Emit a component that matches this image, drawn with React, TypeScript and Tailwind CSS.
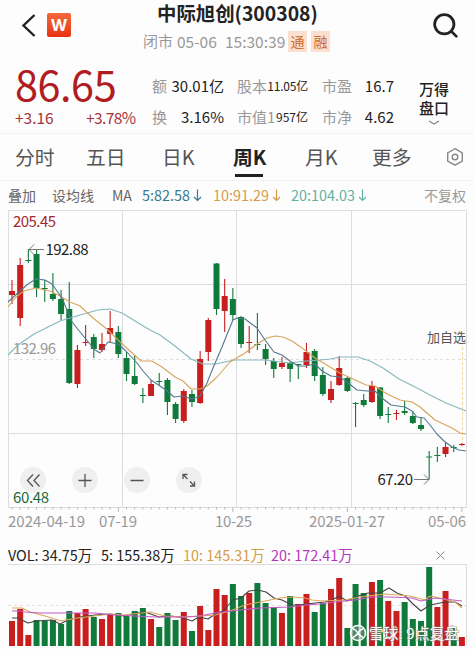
import { Search } from "lucide-react";

const RED = "#c81e1e";
const GREEN = "#0f7a3a";
const STEP = 8.18;

// [high, low, body top, body bottom, volume top, price colour, volume colour]
type Candle = [number, number, number, number, number, "r" | "g", "r" | "g"];

const candles: Candle[] = [
  [280, 304, 291, 295, 621, "r", "r"],
  [258, 326, 265, 318, 609, "r", "r"],
  [249, 263, 260, 261, 635, "g", "r"],
  [250, 297, 254, 288, 620, "g", "g"],
  [280, 302, 288, 289, 621, "g", "g"],
  [273, 301, 294, 299, 620, "g", "g"],
  [290, 320, 299, 314, 624, "g", "g"],
  [282, 384, 309, 383, 611, "g", "g"],
  [345, 388, 350, 384, 613, "r", "r"],
  [325, 346, 342, 343, 609, "r", "r"],
  [334, 358, 337, 349, 617, "g", "g"],
  [333, 352, 344, 350, 619, "r", "r"],
  [311, 342, 328, 334, 614, "r", "r"],
  [326, 358, 332, 354, 613, "g", "g"],
  [352, 381, 358, 374, 616, "g", "g"],
  [355, 385, 376, 384, 611, "g", "g"],
  [388, 403, 395, 396, 608, "g", "g"],
  [380, 396, 384, 396, 619, "r", "r"],
  [373, 385, 381, 382, 627, "g", "g"],
  [378, 415, 380, 402, 613, "g", "g"],
  [402, 423, 404, 419, 620, "g", "g"],
  [389, 423, 391, 421, 612, "r", "r"],
  [390, 407, 394, 402, 631, "g", "g"],
  [351, 404, 359, 403, 606, "r", "r"],
  [318, 361, 320, 352, 630, "r", "r"],
  [263, 315, 263.5, 309, 589, "g", "r"],
  [279, 332, 296, 311, 595, "r", "r"],
  [288, 320, 299, 315, 584, "g", "g"],
  [316, 348, 317, 344, 596, "g", "g"],
  [326, 353, 342, 343, 593, "r", "r"],
  [313, 350, 344, 345, 583, "g", "g"],
  [344, 365, 349, 359, 603, "g", "g"],
  [358, 378, 361, 369, 607, "g", "g"],
  [357, 369, 363, 367, 613, "r", "r"],
  [362, 382, 363, 369, 596, "g", "g"],
  [364, 379, 364, 365, 604, "g", "r"],
  [343, 368, 352, 365, 594, "r", "r"],
  [349, 381, 351, 376, 612, "g", "g"],
  [367, 396, 375, 394, 603, "g", "g"],
  [381, 403, 389, 400, 589, "r", "r"],
  [356, 386, 368, 385, 578, "r", "r"],
  [377, 392, 378, 391, 628, "g", "g"],
  [402, 427, 403, 404, 584, "g", "g"],
  [394, 407, 400, 405, 593, "g", "g"],
  [381, 403, 386, 402, 582, "r", "r"],
  [387, 419, 387.5, 416, 580, "g", "g"],
  [407, 423, 414, 415, 601, "g", "r"],
  [410, 420, 413, 414, 611, "r", "r"],
  [401, 415, 411, 413, 602, "g", "g"],
  [411, 424, 416, 423, 619, "g", "g"],
  [417, 431, 425, 429, 621, "g", "g"],
  [451, 479, 456.5, 457.5, 567, "g", "g"],
  [447, 462, 455, 456, 607, "g", "r"],
  [443, 457, 447, 454, 591, "r", "r"],
  [445, 452, 447, 448, 627, "g", "g"],
  [443, 446, 444, 445, 637, "r", "r"],
];

const ma5 =
  "8,302 20,291 28,284 36,279 45,280 52,284 62,298 72,322 85,338 95,350 100,353 108,342 118,344 126,351 137,363 143,371 151,380 160,386 166,390 174,397 183,396 192,399 200,396 207,383 213,368 222,347 228,332 233,320 237,318 245,319 257,328 265,340 274,352 282,355 290,361 298,366 306,366 315,364 322,371 331,376 340,377 347,382 357,390 367,391 375,391 382,398 391,405 405,407 412,411 417,417 424,418 430,425 437,434 444,441 452,447 459,450 466,451";
const ma10 =
  "8,307 16,297 24,291 36,288 50,291 60,296 70,302 80,306 93,318 108,330 120,342 130,351 141,361 152,361 162,367 175,377 183,381 191,389 200,389 207,386 217,377 230,362 245,353 257,344 267,338 275,336 283,337 292,341 302,348 315,358 330,367 340,373 353,379 366,385 375,386 387,394 400,400 412,402 420,407 435,420 452,428 460,433 466,434";
const ma20 =
  "8,355 18,345 34,334 60,321 80,315 98,310 110,309 122,313 140,324 150,330 160,335 175,346 191,359 203,364 216,364 234,360 265,360 290,363 306,361 320,360 330,359 340,357 358,357 370,361 383,368 399,379 417,388 430,395 446,403 466,411";
const vol5 =
  "12,618 18,618 28,623 36,621 52,620 60,624 68,620 80,617 95,615 110,614 124,616 137,613 145,612 159,617 170,616 180,617 192,621 199,617 208,619 215,614 223,611 233,600 241,598 249,591 258,590 266,592 274,598 282,600 292,605 299,605 315,603 325,602 332,600 339,596 347,601 358,596 368,593 380,593 389,588 397,593 405,596 413,604 421,611 430,605 445,602 455,602 462,606";
const vol10 =
  "12,608 22,608 30,612 45,616 61,621 77,618 95,616 110,614 124,615 150,612 165,616 185,617 215,615 230,611 245,605 260,602 280,598 292,597 305,598 312,600 322,601 345,600 360,597 385,594 410,596 425,600 430,596 440,598 455,602 462,608";
const vol20 =
  "12,611 20,611 25,612 40,613 70,613 95,613 115,615 135,616 155,617 185,617 200,616 215,613 240,610 260,608 290,607 305,605 320,604 335,602 355,600 372,597 390,597 412,598 421,601 435,598 462,601";

const dates = [
  { label: "2024-04-19", x: 8, w: 77 },
  { label: "07-19", x: 99, w: 38 },
  { label: "10-25", x: 215, w: 37 },
  { label: "2025-01-27", x: 309, w: 76 },
  { label: "05-06", x: 428, w: 38 },
];

const color = (c: "r" | "g") => (c === "r" ? RED : GREEN);
const cx = (i: number) => 12 + i * STEP;

function Header() {
  return (
    <header className="flex h-[60px] items-start">
      <svg className="ml-[20px] mt-[13px]" width="18" height="26" fill="none" stroke="#222" strokeWidth="2.4">
        <path d="M14.5 2 3.5 12.5 14.5 23" />
      </svg>
      <div className="ml-[9px] mt-[13px] flex h-[24px] w-[24px] items-center justify-center rounded-[2px] bg-linear-to-b from-[#f4673c] to-[#e8300f] font-['Inter',sans-serif] text-[16px] leading-[24px] font-bold text-white">
        W
      </div>
      <div className="ml-[72px] flex w-[188px] flex-col">
        <h1 className="ml-[14px] h-[28px] whitespace-nowrap text-[19.4px] leading-[28px] font-bold text-[#222]">
          <span className="inline-block -translate-y-px">中际旭创(300308)</span>
        </h1>
        <div className="mt-[2px] flex h-[22px] items-center whitespace-nowrap text-[15px] leading-[22px] text-[#999]">
          <span className="w-[34px]">闭市</span>
          <span className="w-[48px] text-[15.5px]">05-06</span>
          <span className="w-[63px] text-[15.5px]">15:30:39</span>
          <span className="h-[21px] w-[19px] bg-[#fbe0d0] text-center text-[14px] leading-[21px] text-[#d06a2c]">通</span>
          <span className="ml-[4px] h-[21px] w-[19px] bg-[#fbe0d0] text-center text-[14px] leading-[21px] text-[#d06a2c]">融</span>
        </div>
      </div>
      <Search className="ml-[100px] mt-[11px] text-[#222]" size={29} strokeWidth={2.3} />
    </header>
  );
}

function Quote() {
  return (
    <section className="flex h-[74px] border-b border-[#f3f1f1]">
      <div className="w-[152px] pl-[15px] text-[#b01c22]">
        <div className="h-[46px] text-[41.5px] leading-[46px] tracking-[-0.5px]">86.65</div>
        <div className="flex text-[15.5px] leading-[23px] text-[#a5323a]">
          <span className="w-[71px]">+3.16</span>
          <span className="tracking-[-0.6px]">+3.78%</span>
        </div>
      </div>
      <div className="grid h-[73px] w-[242px] grid-cols-[18px_54px_13px_30px_41px_14px_30px_42px] grid-rows-[31px_31px] content-start items-center pt-[10px] whitespace-nowrap text-[15px] leading-[31px] text-[#222]">
        <span className="text-[#999]">额</span>
        <span className="text-right">30.01亿</span>
        <span />
        <span className="text-[#999]">股本</span>
        <span className="text-right text-[12px] tracking-[-0.2px]">11.05亿</span>
        <span />
        <span className="text-[#999]">市盈</span>
        <span className="text-right">16.7</span>
        <span className="text-[#999]">换</span>
        <span className="text-right">3.16%</span>
        <span />
        <span className="text-[#999]">市值1</span>
        <span className="text-right text-[12px]">957亿</span>
        <span />
        <span className="text-[#999]">市净</span>
        <span className="text-right">4.62</span>
      </div>
      <div className="ml-[25px] flex w-[30px] flex-col items-center pt-[19px] text-[15px] leading-[19px] font-medium text-[#222]">
        <span>万得</span>
        <span>盘口</span>
        <svg width="12" height="6" fill="none" stroke="#888" strokeWidth="1.3" className="mt-[3px]">
          <path d="M1 1 6 4 11 1" />
        </svg>
      </div>
    </section>
  );
}

function Tabs() {
  return (
    <nav className="flex h-[47px] items-start border-b border-[#f3f1f1] pt-[8px] pl-[15px] whitespace-nowrap text-[19.8px] leading-[30px] text-[#555]">
      <span className="w-[71px]">分时</span>
      <span className="w-[76px]">五日</span>
      <span className="w-[71px]">日K</span>
      <span className="flex w-[72px] flex-col font-bold text-[#222]">
        周K
        <i className="mt-[2px] ml-[2px] h-[3px] w-[28px] bg-[#222]" />
      </span>
      <span className="w-[67px]">月K</span>
      <span className="w-[74px]">更多</span>
      <svg className="mt-[5px]" width="18" height="20" fill="none" stroke="#888" strokeWidth="1.4">
        <path d="M9 1.7 16.3 5.8V14L9 18.2 1.7 14V5.8Z" />
        <circle cx="9" cy="10" r="2.8" />
      </svg>
    </nav>
  );
}

function Averages() {
  return (
    <div className="flex h-[28px] items-center pl-[8px] whitespace-nowrap text-[14px] leading-[28px] text-[#666]">
      <span className="w-[44px]">叠加</span>
      <span className="w-[60px]">设均线</span>
      <span className="w-[30px]">MA</span>
      <Average label="5:82.58" className="w-[71px] text-[#357c8c]" />
      <Average label="10:91.29" className="w-[78px] text-[#d69b45]" />
      <Average label="20:104.03" className="w-[133px] text-[#63b0a2]" />
      <span className="text-[#999]">不复权</span>
    </div>
  );
}

function Average({ label, className }: { label: string; className: string }) {
  return (
    <span className={`flex h-[28px] items-center text-[14.4px] leading-[26px] ${className}`}>
      {label}
      <svg className="ml-[3px]" width="9" height="13" fill="none" stroke="currentColor" strokeWidth="1.2">
        <path d="M4.5 0.5V11.5M1 8 4.5 11.5 8 8" />
      </svg>
    </span>
  );
}

function PriceChart() {
  return (
    <svg className="block" width="474" height="331" viewBox="0 209 474 331" fill="none">
      <g stroke="#dddddf">
        <path d="M8.5 210.5H466.5V507.5H8.5ZM8.5 284.5H466M8.5 433.5H466M122.5 210V507M236.5 210V507M351.5 210V507" />
        <path d="M8 359.5H466" strokeDasharray="3 3" />
        {candles.map((_, i) => (
          <path key={i} d={`M${cx(i)} 507v${[13, 27, 41, 55].includes(i) ? 5 : 2.5}`} stroke="#bbb" />
        ))}
      </g>
      <text x="13" y="354" fontSize="15" fill="#999" textLength="43">132.96</text>
      <path d="M462.5 347V443" stroke="#f0d9a0" strokeDasharray="3 2" />
      {candles.map(([high, low, top, bottom, , c], i) => (
        <g key={i}>
          <path d={`M${cx(i)} ${high}V${low}`} stroke={color(c)} strokeWidth="1.1" />
          <rect x={cx(i) - 3} y={top} width="6" height={Math.max(bottom - top, 1)} fill={color(c)} />
        </g>
      ))}
      <g strokeWidth="1.1" strokeLinejoin="round">
        <polyline points={ma20} stroke="#85b9bd" />
        <polyline points={ma10} stroke="#d8a45c" />
        <polyline points={ma5} stroke="#527890" />
      </g>
      <path d="M44 249.5H29M34 244.5 29 249.5 34 254.5" stroke="#777" />
      <path d="M414 479.5H429M424 474.5 429 479.5 424 484.5" stroke="#777" />
      <g fontSize="15" fill="#222">
        <text x="13" y="227" fill="#a5272d" textLength="43">205.45</text>
        <text x="45.5" y="255" textLength="43">192.88</text>
        <text x="377.5" y="484.5" textLength="35.5">67.20</text>
      </g>
      <text x="427" y="342" fontSize="13" fill="#555">加自选</text>
      {[33, 85, 137, 189].map((x) => (
        <circle key={x} cx={x} cy="480" r="13" fill="#efefef" />
      ))}
      <g stroke="#555" strokeWidth="1.3">
        <path d="M33 474.5 27.5 480.5 33 486.5M39.5 474.5 34 480.5 39.5 486.5" />
        <path d="M78.5 480.5H91.5M85 474V487M130.5 480.5H143.5" />
        <path d="M187.5 479 183 474.5M183 479V474.5H187.5M190 481.5 194.5 486M194.5 481.5V486H190" />
      </g>
      <text x="13" y="503" fontSize="15" fill="#1a6a3a" textLength="36">60.48</text>
      <g fontSize="15" fill="#999">
        {dates.map((d) => (
          <text key={d.label} x={d.x} y="526.5" textLength={d.w}>
            {d.label}
          </text>
        ))}
      </g>
    </svg>
  );
}

function VolumeChart() {
  return (
    <section>
      <div className="flex h-[24px] items-center pl-[8px] pt-[6px] whitespace-nowrap text-[14.4px] leading-[20px] text-[#222]">
        <span className="w-[93px]">VOL: 34.75万</span>
        <span className="w-[82px]">5: 155.38万</span>
        <span className="w-[88px] text-[#d69b45]">10: 145.31万</span>
        <span className="w-[165px] text-[#b637bd]">20: 172.41万</span>
        <svg width="9" height="9" stroke="#888">
          <path d="M0.5 0.5 8.5 8.5M8.5 0.5 0.5 8.5" />
        </svg>
      </div>
      <svg className="block" width="474" height="85" viewBox="0 564 474 85" fill="none">
        <path d="M8 564.5H466.5V646" stroke="#dddddf" />
        <path d="M8 605.5H466" stroke="#e6dfdf" strokeDasharray="3 3" />
        {candles.map(([, , , , top, , c], i) => (
          <rect key={i} x={cx(i) - 3} y={top} width="6" height={646 - top} fill={color(c)} />
        ))}
        <g strokeWidth="1.1" strokeLinejoin="round">
          <polyline points={vol5} stroke="#444" />
          <polyline points={vol10} stroke="#dda75a" />
          <polyline points={vol20} stroke="#c65bc9" />
        </g>
        <g stroke="#fff" strokeWidth="1.5">
          <circle cx="358" cy="633" r="7.5" fill="#999" fillOpacity="0.45" />
          <path d="M353 629C357 629 359 637 363 637M363 629C359 629 357 637 353 637" />
        </g>
        <text
          x="369"
          y="638.5"
          fontSize="14.5"
          fill="#fff"
          stroke="#888"
          strokeOpacity="0.6"
          strokeWidth="1.4"
          paintOrder="stroke"
          textLength="90"
        >
          雪球: 9点复盘
        </text>
      </svg>
    </section>
  );
}

export default function App() {
  return (
    <main className="h-[649px] w-[474px] overflow-hidden bg-[#fefdfe] font-['Noto_Sans_CJK_SC',sans-serif]">
      <Header />
      <Quote />
      <Tabs />
      <Averages />
      <PriceChart />
      <VolumeChart />
    </main>
  );
}
